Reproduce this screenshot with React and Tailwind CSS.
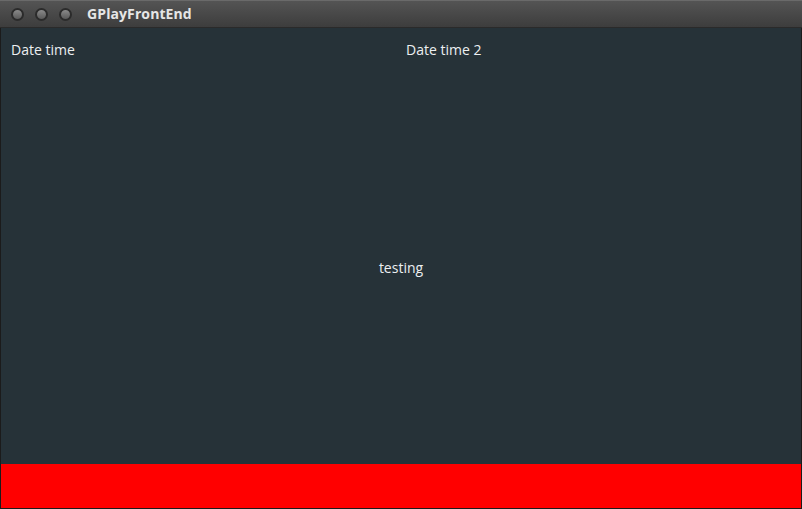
export default function App() {
  const font = { fontFamily: '"Open Sans", "DejaVu Sans", sans-serif' };

  return (
    <div className="w-[802px] h-[509px] flex flex-col bg-[#1b1b1b] px-px pb-px" style={font}>
      {/* title bar */}
      <div className="h-[28px] -mx-px flex items-center bg-gradient-to-b from-[#545454] to-[#3d3d3d] border-t border-[#6a6a6a] border-b border-b-[#2a2a2a]">
        <div className="flex items-center gap-[11px] pl-[11px]">
          {[0, 1, 2].map((i) => (
            <div
              key={i}
              className="w-[13px] h-[13px] rounded-full border-2 border-[#2b2b2b] bg-gradient-to-b from-[#8a8a8a] to-[#5a5a5a]"
            />
          ))}
        </div>
        <span className="ml-[15px] text-[14px] font-bold text-[#e6e6e6] leading-none tracking-[0.1px]">GPlayFrontEnd</span>
      </div>

      {/* content */}
      <div className="flex-1 flex flex-col bg-[#263238] text-[#eceff1] text-[14px]">
        <div className="grid grid-cols-2 pt-[12px] leading-[20px]">
          <div className="pl-[10px]">Date time</div>
          <div className="pl-[5px]">Date time 2</div>
        </div>
        <div className="flex-1 flex items-center justify-center pt-[10px]">
          <span>testing</span>
        </div>
        <div className="h-[44px] bg-[#ff0000]" />
      </div>
    </div>
  );
}
